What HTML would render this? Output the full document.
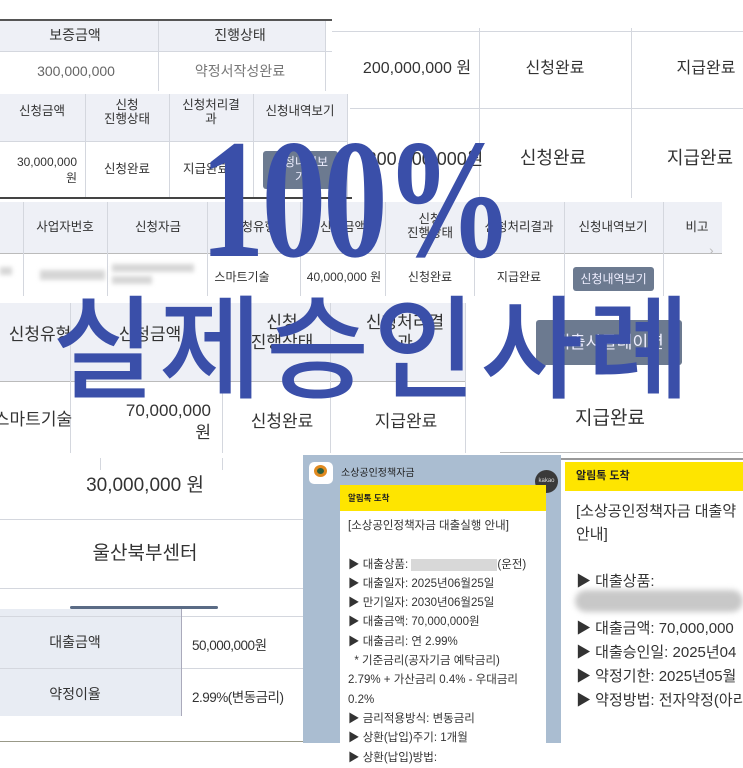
<!DOCTYPE html>
<html><head><meta charset="utf-8"><style>
*{margin:0;padding:0;box-sizing:border-box}
body{width:743px;height:743px;overflow:hidden;background:#fff;position:relative;font-family:"Liberation Sans","Noto Sans CJK KR",sans-serif;color:#333}
.a{position:absolute}
.t{position:absolute;text-align:center;white-space:nowrap;transform:translateX(-50%);line-height:1.15}
.hd{background:#eef0f6}
.vl{position:absolute;width:1px;background:#d4d7de}
.hl{position:absolute;height:1px;background:#d4d7de}
.btn{position:absolute;background:#6c7a90;color:#eef;border-radius:3px;text-align:center}
.blur{position:absolute;background:#d6d6d6;filter:blur(2px)}
</style></head><body>

<!-- Top right table -->
<div class="a" style="left:332px;top:0;width:411px;height:200px;background:#fff"></div>
<div class="hl" style="left:332px;top:31px;width:411px"></div>
<div class="hl" style="left:332px;top:108px;width:411px"></div>
<div class="vl" style="left:479px;top:28px;height:170px"></div>
<div class="vl" style="left:631px;top:28px;height:170px"></div>
<div class="t" style="left:417px;top:60px;font-size:16px">200,000,000 원</div>
<div class="t" style="left:555px;top:60px;font-size:16px">신청완료</div>
<div class="t" style="left:706px;top:60px;font-size:16px">지급완료</div>
<div class="t" style="left:425px;top:149px;font-size:18px">200,000,000원</div>
<div class="t" style="left:553px;top:148px;font-size:18px">신청완료</div>
<div class="t" style="left:700px;top:148px;font-size:18px">지급완료</div>

<!-- Top left table -->
<div class="a" style="left:0;top:0;width:332px;height:93px;background:#fff"></div>
<div class="a" style="left:0;top:19px;width:332px;height:2px;background:#555"></div>
<div class="a hd" style="left:0;top:21px;width:325px;height:30px"></div>
<div class="hl" style="left:0;top:51px;width:332px"></div>
<div class="vl" style="left:158px;top:21px;height:70px"></div>
<div class="vl" style="left:325px;top:21px;height:70px"></div>
<div class="t" style="left:75px;top:27px;font-size:14px">보증금액</div>
<div class="t" style="left:240px;top:27px;font-size:14px">진행상태</div>
<div class="t" style="left:76px;top:63px;font-size:14px;color:#666">300,000,000</div>
<div class="t" style="left:240px;top:63px;font-size:14px;color:#777">약정서작성완료</div>

<!-- Table 2 -->
<div class="a" style="left:0;top:94px;width:350px;height:104px;background:#fff"></div>
<div class="a hd" style="left:0;top:94px;width:347px;height:47px"></div>
<div class="hl" style="left:0;top:141px;width:347px"></div>
<div class="a" style="left:0;top:197px;width:352px;height:2px;background:#444"></div>
<div class="vl" style="left:85px;top:94px;height:103px"></div>
<div class="vl" style="left:169px;top:94px;height:103px"></div>
<div class="vl" style="left:253px;top:94px;height:103px"></div>
<div class="vl" style="left:347px;top:94px;height:103px"></div>
<div class="t" style="left:42px;top:104px;font-size:12.5px">신청금액</div>
<div class="t" style="left:127px;top:98px;font-size:12.5px">신청<br>진행상태</div>
<div class="t" style="left:211px;top:98px;font-size:12.5px">신청처리결<br>과</div>
<div class="t" style="left:300px;top:104px;font-size:12.5px">신청내역보기</div>
<div class="a" style="left:12px;top:155px;font-size:12px;text-align:right;width:65px;line-height:1.3">30,000,000<br>원</div>
<div class="t" style="left:127px;top:162px;font-size:12.5px">신청완료</div>
<div class="t" style="left:206px;top:162px;font-size:12.5px">지급완료</div>
<div class="btn" style="left:263px;top:151px;width:75px;height:38px;font-size:12px;line-height:15px;padding-top:4px">신청내역보<br>기</div>

<!-- Table 3 -->
<div class="a" style="left:0;top:200px;width:722px;height:96px;background:#fff"></div>
<div class="a hd" style="left:0;top:202px;width:722px;height:51px"></div>
<div class="hl" style="left:0;top:253px;width:722px;background:#bbb"></div>
<div class="vl" style="left:23px;top:202px;height:94px"></div>
<div class="vl" style="left:107px;top:202px;height:94px"></div>
<div class="vl" style="left:207px;top:202px;height:94px"></div>
<div class="vl" style="left:300px;top:202px;height:94px"></div>
<div class="vl" style="left:385px;top:202px;height:94px"></div>
<div class="vl" style="left:474px;top:202px;height:94px"></div>
<div class="vl" style="left:564px;top:202px;height:94px"></div>
<div class="vl" style="left:663px;top:202px;height:94px"></div>
<div class="t" style="left:65px;top:220px;font-size:12.5px">사업자번호</div>
<div class="t" style="left:158px;top:220px;font-size:12.5px">신청자금</div>
<div class="t" style="left:253px;top:220px;font-size:12.5px">신청유형</div>
<div class="t" style="left:343px;top:220px;font-size:12.5px">신청금액</div>
<div class="t" style="left:430px;top:212px;font-size:12.5px">신청<br>진행상태</div>
<div class="t" style="left:519px;top:220px;font-size:12.5px">신청처리결과</div>
<div class="t" style="left:613px;top:220px;font-size:12.5px">신청내역보기</div>
<div class="t" style="left:697px;top:220px;font-size:12.5px">비고</div>
<div class="a" style="left:709px;top:242px;font-size:14px;color:#bbb">›</div>
<div class="blur" style="left:0;top:267px;width:12px;height:8px"></div>
<div class="blur" style="left:40px;top:270px;width:65px;height:10px"></div>
<div class="blur" style="left:112px;top:264px;width:82px;height:8px"></div>
<div class="blur" style="left:112px;top:276px;width:40px;height:8px"></div>
<div class="t" style="left:242px;top:271px;font-size:12px">스마트기술</div>
<div class="t" style="left:344px;top:271px;font-size:12px">40,000,000 원</div>
<div class="t" style="left:430px;top:271px;font-size:12px">신청완료</div>
<div class="t" style="left:519px;top:271px;font-size:12px">지급완료</div>
<div class="btn" style="left:573px;top:267px;width:81px;height:24px;font-size:12px;line-height:24px">신청내역보기</div>

<!-- Table 4 -->
<div class="a" style="left:0;top:298px;width:743px;height:160px;background:#fff"></div>
<div class="a hd" style="left:0;top:303px;width:465px;height:78px"></div>
<div class="hl" style="left:0;top:381px;width:465px;background:#bbb"></div>
<div class="vl" style="left:70px;top:303px;height:150px"></div>
<div class="vl" style="left:222px;top:303px;height:150px"></div>
<div class="vl" style="left:330px;top:303px;height:150px"></div>
<div class="vl" style="left:465px;top:303px;height:150px"></div>
<div class="t" style="left:40px;top:325px;font-size:17px">신청유형</div>
<div class="t" style="left:150px;top:325px;font-size:17px">신청금액</div>
<div class="t" style="left:282px;top:313px;font-size:17px">신청<br>진행상태</div>
<div class="t" style="left:405px;top:313px;font-size:17px">신청처리결<br>과</div>
<div class="btn" style="left:536px;top:320px;width:146px;height:45px;font-size:17px;line-height:45px">대출시뮬레이션</div>
<div class="t" style="left:33px;top:410px;font-size:17px">스마트기술</div>
<div class="a" style="left:95px;top:400px;width:116px;text-align:right;font-size:17px;line-height:1.3">70,000,000<br>원</div>
<div class="t" style="left:282px;top:412px;font-size:17px">신청완료</div>
<div class="t" style="left:406px;top:412px;font-size:17px">지급완료</div>
<div class="t" style="left:610px;top:408px;font-size:19px">지급완료</div>
<div class="hl" style="left:500px;top:452px;width:243px;background:#bbb"></div>

<!-- Bottom left -->
<div class="a" style="left:0;top:458px;width:303px;height:285px;background:#fff"></div>
<div class="vl" style="left:100px;top:458px;height:12px"></div>
<div class="vl" style="left:222px;top:458px;height:12px"></div>
<div class="t" style="left:145px;top:475px;font-size:19px">30,000,000 원</div>
<div class="hl" style="left:0;top:519px;width:303px"></div>
<div class="t" style="left:145px;top:543px;font-size:19px">울산북부센터</div>
<div class="hl" style="left:0;top:588px;width:303px"></div>
<div class="a" style="left:70px;top:606px;width:148px;height:3px;background:#5a6b85;border-radius:2px"></div>
<div class="a" style="left:0;top:609px;width:181px;height:107px;background:#e8ecf3"></div>
<div class="hl" style="left:0;top:616px;width:303px"></div>
<div class="hl" style="left:0;top:668px;width:303px"></div>
<div class="vl" style="left:181px;top:609px;height:107px;background:#aab"></div>
<div class="t" style="left:75px;top:634px;font-size:14px">대출금액</div>
<div class="t" style="left:75px;top:686px;font-size:14px">약정이율</div>
<div class="a" style="left:192px;top:634px;font-size:13.5px;letter-spacing:-.5px">50,000,000원</div>
<div class="a" style="left:192px;top:686px;font-size:13.5px;letter-spacing:-.5px">2.99%(변동금리)</div>
<div class="hl" style="left:0;top:741px;width:303px;background:#998"></div>

<!-- Right kakao card -->
<div class="a" style="left:563px;top:458px;width:180px;height:258px;background:#fff"></div>
<div class="a" style="left:500px;top:458px;width:243px;height:2px;background:#999"></div>
<div class="a" style="left:565px;top:462px;width:178px;height:29px;background:#fee500"></div>
<div class="a" style="left:576px;top:467px;font-size:11px;font-weight:bold;color:#222">알림톡 도착</div>
<div class="a" style="left:576px;top:500px;font-size:15px;line-height:23px;color:#333;white-space:nowrap">[소상공인정책자금 대출약<br>안내]</div>
<div class="a" style="left:576px;top:570px;font-size:15px;color:#333;white-space:nowrap">▶ 대출상품:</div>
<div class="a" style="left:575px;top:590px;width:168px;height:22px;border-radius:11px;background:#c8c8c8;filter:blur(3px)"></div>
<div class="a" style="left:576px;top:617px;font-size:15px;line-height:24px;color:#333;white-space:nowrap">▶ 대출금액: 70,000,000<br>▶ 대출승인일: 2025년04<br>▶ 약정기한: 2025년05월<br>▶ 약정방법: 전자약정(아리</div>

<!-- Kakao chat -->
<div class="a" style="left:303px;top:455px;width:258px;height:288px;background:#aabdd1"></div>
<div class="a" style="left:309px;top:462px;width:24px;height:22px;background:#fff;border-radius:5px"></div>
<div class="a" style="left:314px;top:465px;width:13px;height:12px;border-radius:50%;background:#2e5f3e;border:3px solid #e08a20"></div>
<div class="a" style="left:341px;top:464px;font-size:10px;color:#222">소상공인정책자금</div>
<div class="a" style="left:535px;top:470px;width:23px;height:23px;border-radius:50%;background:#3a3a3a;color:#ddd;font-size:6px;line-height:23px;text-align:center">kakao</div>
<div class="a" style="left:340px;top:485px;width:206px;height:258px;background:#fff"></div>
<div class="a" style="left:340px;top:485px;width:206px;height:26px;background:#fee500"></div>
<div class="a" style="left:348px;top:492px;font-size:8.5px;font-weight:bold;color:#222">알림톡 도착</div>
<div class="a" style="left:348px;top:517px;font-size:11.5px;line-height:19.3px;color:#333;white-space:nowrap">[소상공인정책자금 대출실행 안내]<br><br>▶ 대출상품: <span style="display:inline-block;width:86px;height:12px;background:#d8d8d8;vertical-align:middle"></span>(운전)<br>▶ 대출일자: 2025년06월25일<br>▶ 만기일자: 2030년06월25일<br>▶ 대출금액: 70,000,000원<br>▶ 대출금리: 연 2.99%<br>&nbsp;&nbsp;* 기준금리(공자기금 예탁금리)<br>2.79% + 가산금리 0.4% - 우대금리<br>0.2%<br>▶ 금리적용방식: 변동금리<br>▶ 상환(납입)주기: 1개월<br>▶ 상환(납입)방법:</div>

<!-- Big overlay text -->
<div class="a" style="left:200px;top:114px;font-family:'Liberation Serif',serif;font-weight:bold;font-size:170px;line-height:1;color:#3a4fa9;transform:scaleX(0.76);transform-origin:left top;letter-spacing:-4px;white-space:nowrap">100%</div>
<div class="a" style="left:52px;top:280px;font-family:'Noto Sans CJK KR',sans-serif;font-weight:500;font-size:112px;line-height:1.1;color:#3a4fa9;letter-spacing:4px;white-space:nowrap">실제승인사례</div>
</body></html>
